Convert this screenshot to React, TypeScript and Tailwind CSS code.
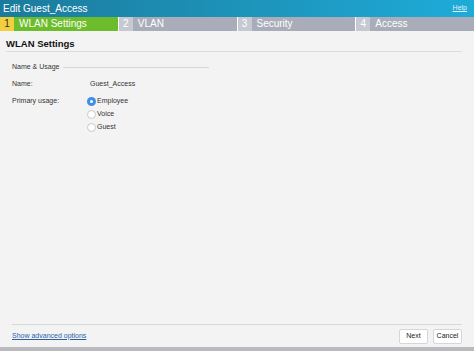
import React from "react";

const tabs = [
  { n: "1", label: "WLAN Settings", active: true },
  { n: "2", label: "VLAN", active: false },
  { n: "3", label: "Security", active: false },
  { n: "4", label: "Access", active: false },
];

const Radio = ({ checked, label }: { checked?: boolean; label: string }) => (
  <label className="flex items-center h-[13px]">
    <span
      className={`w-[9px] h-[9px] rounded-full flex items-center justify-center ${
        checked ? "bg-[#3d8fe6]" : "bg-white border border-[#c8c8c8]"
      }`}
    >
      {checked && <span className="w-[3px] h-[3px] rounded-full bg-white" />}
    </span>
    <span className="ml-[1px]">{label}</span>
  </label>
);

export default function App() {
  return (
    <div
      className="w-[474px] h-[351px] flex flex-col bg-[#f3f3f3] overflow-hidden"
      style={{ fontFamily: '"Liberation Sans", Arial, sans-serif' }}
    >
      {/* Title */}
      <div className="h-[17px] flex items-center justify-between px-[3px] bg-gradient-to-r from-[#1b7b9c] to-[#1eabd8] text-white">
        <span className="text-[10px] leading-none">Edit Guest_Access</span>
        <a href="#" className="text-[7px] underline text-[#dff3ff] mr-[4px]">Help</a>
      </div>

      {/* Steps */}
      <div className="h-[14px] flex gap-[1px] bg-white">
        {tabs.map((t) => (
          <div key={t.n} className="flex flex-1 text-white leading-none">
            <span
              className={`w-[14px] flex items-center justify-center text-[10px] ${
                t.active ? "bg-[#f3cf3d] text-[#333]" : "bg-[#c6c9d1]"
              }`}
            >
              {t.n}
            </span>
            <span
              className={`flex-1 flex items-center pl-[5px] text-[10px] ${
                t.active ? "bg-[#6cbc2b]" : "bg-[#a9adb9]"
              }`}
            >
              {t.label}
            </span>
          </div>
        ))}
      </div>

      {/* Body */}
      <div className="flex-1 flex flex-col px-[6px] text-[7px] text-[#333]">
        <div className="pt-[6px] pb-[0px] border-b border-[#dcdcdc] mr-[6px]">
          <span className="text-[9.5px] font-bold text-[#111]">WLAN Settings</span>
        </div>

        <div className="pl-[6px] pt-[10px]">
          <div className="flex items-center w-[197px]">
            <span>Name &amp; Usage</span>
            <span className="flex-1 ml-[4px] h-[1px] bg-[#d6d6d6]" />
          </div>

          <div className="flex mt-[5px] h-[13px] items-center">
            <span className="w-[78px]">Name:</span>
            <span>Guest_Access</span>
          </div>

          <div className="flex mt-[4px]">
            <span className="w-[75px] h-[13px] flex items-center">Primary usage:</span>
            <div className="flex flex-col">
              <Radio checked label="Employee" />
              <Radio label="Voice" />
              <Radio label="Guest" />
            </div>
          </div>
        </div>

        <div className="flex-1" />

        <div className="mx-[6px] border-t border-[#d8d8d8] flex items-center justify-between h-[23px]">
          <a href="#" className="text-[#2c5ea6] underline">Show advanced options</a>
          <div className="flex gap-[5px]">
            <button className="h-[15px] w-[29px] bg-white border border-[#d6d6d6] rounded-[2px] text-[7px] text-[#222]">Next</button>
            <button className="h-[15px] w-[29px] bg-white border border-[#d6d6d6] rounded-[2px] text-[7px] text-[#222]">Cancel</button>
          </div>
        </div>
      </div>
      <div className="h-[4px] bg-[#b9bbbf]" />
    </div>
  );
}
